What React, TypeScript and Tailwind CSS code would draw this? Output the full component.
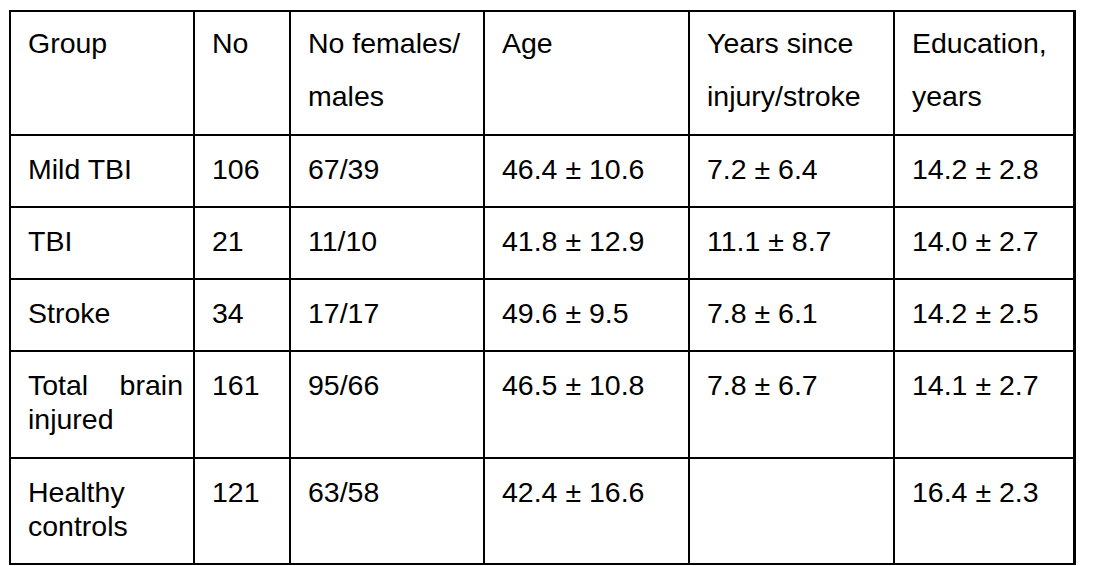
import React from "react";

type Row = {
  cells: string[];
  height: string;
};

const HEADERS = [
  ["Group"],
  ["No"],
  ["No females/", "males"],
  ["Age"],
  ["Years since", "injury/stroke"],
  ["Education,", "years"],
];

const ROWS: Row[] = [
  { cells: ["Mild TBI", "106", "67/39", "46.4 ± 10.6", "7.2 ± 6.4", "14.2 ± 2.8"], height: "h-[72px]" },
  { cells: ["TBI", "21", "11/10", "41.8 ± 12.9", "11.1 ± 8.7", "14.0 ± 2.7"], height: "h-[72px]" },
  { cells: ["Stroke", "34", "17/17", "49.6 ± 9.5", "7.8 ± 6.1", "14.2 ± 2.5"], height: "h-[72px]" },
  { cells: ["Total brain injured", "161", "95/66", "46.5 ± 10.8", "7.8 ± 6.7", "14.1 ± 2.7"], height: "h-[107px]" },
  { cells: ["Healthy controls", "121", "63/58", "42.4 ± 16.6", "", "16.4 ± 2.3"], height: "h-[106px]" },
];

const COLS = "grid-cols-[184px_96px_194px_205px_205px_181px]";

export default function App() {
  return (
    <div className="min-h-screen bg-white pl-[9px] pt-[10px] text-black [font-family:'Liberation_Sans',Arial,sans-serif]">
      <div className={`grid w-[1067px] ${COLS} border-l-2 border-t-2 border-black text-[28.5px]`}>
        {HEADERS.map((lines, i) => (
          <div
            key={`h-${i}`}
            className={`h-[124px] border-b-2 border-black pl-[17px] pt-[5px] leading-[53px] ${
              i === 5 ? "border-r-[3px]" : "border-r-2"
            }`}
          >
            {lines.map((line) => (
              <div key={line}>{line}</div>
            ))}
          </div>
        ))}

        {ROWS.map((row, r) =>
          row.cells.map((cell, c) => (
            <div
              key={`${r}-${c}`}
              className={`${row.height} border-b-2 border-black pt-[16px] leading-[34px] ${
                c === 5 ? "border-r-[3px]" : "border-r-2"
              } ${c === 0 ? "pl-[17px] pr-[10px] text-justify" : "pl-[17px]"}`}
            >
              {cell}
            </div>
          ))
        )}
      </div>
    </div>
  );
}
